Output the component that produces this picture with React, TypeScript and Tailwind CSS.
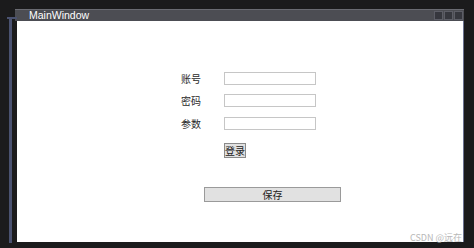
import React from "react";

const cjk = { fontFamily: '"Noto Sans CJK SC", "Liberation Sans", sans-serif' };

export default function App() {
  return (
    <div className="relative w-[474px] h-[248px] bg-[#1b1b1c] flex overflow-hidden">
      {/* left frame line */}
      <div className="ml-[9px] mt-[18px] w-[3px] h-[225px] bg-[#4a5270]" />
      <div className="absolute left-[7px] top-[17px] w-[10px] h-[2px] bg-[#4a5270]" />
      {/* window */}
      <div className="ml-[3px] mt-[9px] w-[449px] h-[233px] flex flex-col">
        {/* title bar */}
        <div className="h-[12px] bg-[#4c4d53] border-t border-[#6a6b72] flex items-center pl-[14px] pr-[1px]">
          <span
            className="text-[10.5px] leading-none text-white flex-1"
            style={{ fontFamily: '"Liberation Sans", Arial, sans-serif' }}
          >
            MainWindow
          </span>
          <div className="flex gap-[1px]">
            <div className="w-[9px] h-[9px] bg-[#36373e] border border-[#5c5d66]" />
            <div className="w-[9px] h-[9px] bg-[#36373e] border border-[#5c5d66]" />
            <div className="w-[9px] h-[9px] bg-[#36373e] border border-[#5c5d66]" />
          </div>
        </div>
        {/* body */}
        <div className="flex-1 flex pl-[2px]">
          <div className="relative flex-1 bg-white border-r border-[#6b7290] flex flex-col" style={cjk}>
            <div className="flex flex-col pl-[164px] pt-[51px]">
              <div className="flex items-center h-[13px]">
                <span className="w-[43px] text-[10px] leading-none text-[#2a2a2a]">账号</span>
                <div className="w-[92px] h-[13px] border border-[#c6c6c6] bg-white" />
              </div>
              <div className="flex items-center h-[13px] mt-[9px]">
                <span className="w-[43px] text-[10px] leading-none text-[#2a2a2a]">密码</span>
                <div className="w-[92px] h-[13px] border border-[#c6c6c6] bg-white" />
              </div>
              <div className="flex items-center h-[13px] mt-[10px]">
                <span className="w-[43px] text-[10px] leading-none text-[#2a2a2a]">参数</span>
                <div className="w-[92px] h-[13px] border border-[#c6c6c6] bg-white" />
              </div>
              <div className="mt-[13px] ml-[43px] w-[22px] h-[15px] bg-[#e1e1e1] border border-[#8a8a8a] flex items-center justify-center">
                <span className="text-[10px] leading-none text-[#222]">登录</span>
              </div>
            </div>
            <div className="ml-[187px] mt-[29px] w-[137px] h-[15px] bg-[#e1e1e1] border border-[#9a9a9a] flex items-center justify-center">
              <span className="text-[10px] leading-none text-[#222]">保存</span>
            </div>
            <span className="absolute right-[1px] bottom-[0px] text-[9px] leading-none text-[#b8b8b8]">
              CSDN @远在
            </span>
          </div>
        </div>
      </div>
    </div>
  );
}
